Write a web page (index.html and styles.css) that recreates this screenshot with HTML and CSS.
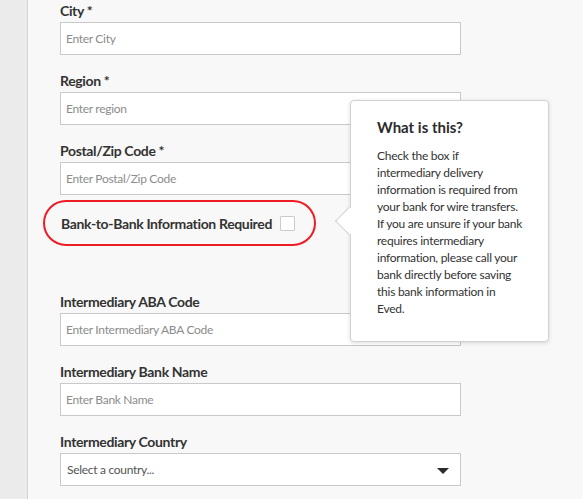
FILE: index.html
```html
<!DOCTYPE html>
<html lang="en">
<head>
<meta charset="utf-8">
<title>Bank information</title>
<link rel="stylesheet" href="styles.css">
</head>
<body>
<div class="page">
  <aside class="sidebar"></aside>
  <main class="main">
    <form class="form">
      <div class="field">
        <label class="label">City *</label>
        <input class="input" type="text" placeholder="Enter City">
      </div>
      <div class="field">
        <label class="label">Region *</label>
        <input class="input" type="text" placeholder="Enter region">
      </div>
      <div class="field field--tight">
        <label class="label">Postal/Zip Code *</label>
        <input class="input" type="text" placeholder="Enter Postal/Zip Code">
      </div>
      <div class="bank-row">
        <span class="label label--inline">Bank-to-Bank Information Required</span>
        <span class="checkbox"></span>
      </div>
      <div class="field">
        <label class="label">Intermediary ABA Code</label>
        <input class="input" type="text" placeholder="Enter Intermediary ABA Code">
      </div>
      <div class="field">
        <label class="label">Intermediary Bank Name</label>
        <input class="input" type="text" placeholder="Enter Bank Name">
      </div>
      <div class="field">
        <label class="label">Intermediary Country</label>
        <div class="select">
          <span class="select-text">Select a country...</span>
          <svg class="select-arrow" width="12" height="6" viewBox="0 0 12 6"><path d="M0 0 H12 L6 6 Z" fill="#2b2b2b"/></svg>
        </div>
      </div>
    </form>
    <div class="popover">
      <span class="popover-arrow"></span>
      <h3 class="popover-title">What is this?</h3>
      <p class="popover-text">Check the box if<br>intermediary delivery<br>information is required from<br>your bank for wire transfers.<br>If you are unsure if your bank<br>requires intermediary<br>information, please call your<br>bank directly before saving<br>this bank information in<br>Eved.</p>
    </div>
  </main>
</div>
</body>
</html>
```

FILE: styles.css
```css
* { box-sizing: border-box; }
html, body { margin: 0; padding: 0; }
body {
  font-family: Lato, "Open Sans", sans-serif;
  color: #333;
  background: #f8f8f8;
  width: 583px;
  height: 499px;
  overflow: hidden;
}
.page {
  display: flex;
  height: 499px;
}
.sidebar {
  width: 28px;
  flex: 0 0 28px;
  background: #ebebeb;
  border-right: 1px solid #d3d3d3;
}
.main {
  position: relative;
  flex: 1;
  padding: 2px 0 0 32px;
  background: #f8f8f8;
}
.form {
  width: 401px;
}
.field {
  display: flex;
  flex-direction: column;
  margin-bottom: 17px;
}
.field--tight { margin-bottom: 5px; }
.label {
  display: block;
  font-size: 14px;
  font-weight: 700;
  letter-spacing: -0.35px;
  line-height: 17px;
  height: 17px;
  margin-bottom: 3px;
  color: #333;
}
.label--inline {
  display: inline-block;
  margin: 0;
}
.input {
  display: block;
  width: 401px;
  height: 33px;
  border: 1px solid #c9c9c9;
  background: #fff;
  padding: 0 5px;
  font-family: inherit;
  font-size: 12px;
  letter-spacing: -0.3px;
  color: #333;
  outline: none;
  border-radius: 0;
  margin: 0;
}
.input::placeholder { color: #8c8c8c; }
.bank-row {
  display: inline-flex;
  align-items: center;
  gap: 8px;
  height: 46px;
  margin-left: -17px;
  padding: 0 19px 0 16px;
  border: 2px solid #ee1c24;
  border-radius: 23px;
  margin-bottom: 47px;
}
.checkbox {
  width: 15px;
  height: 15px;
  border: 1px solid #cbcbcb;
  background: #fff;
  border-radius: 1px;
}
.select {
  display: flex;
  align-items: center;
  justify-content: space-between;
  width: 401px;
  height: 33px;
  border: 1px solid #c9c9c9;
  background: #fff;
  padding: 0 11px 0 6px;
}
.select-text {
  font-size: 12px;
  letter-spacing: -0.3px;
  color: #555;
}
.select-arrow { display: block; margin-top: 2px; }
.popover {
  position: absolute;
  left: 322px;
  top: 100px;
  width: 199px;
  height: 242px;
  background: #fff;
  border: 1px solid #d2d2d2;
  border-radius: 4px;
  box-shadow: 0 1px 4px rgba(0,0,0,0.14);
  padding: 16px 8px 0 26px;
}
.popover-arrow {
  position: absolute;
  left: -12px;
  top: 110px;
  width: 20px;
  height: 20px;
  background: #fff;
  border-left: 1px solid #d2d2d2;
  border-bottom: 1px solid #d2d2d2;
  transform: rotate(45deg);
}
.popover-title {
  margin: 0 0 10px;
  font-size: 15px;
  line-height: 20px;
  font-weight: 700;
  color: #2b2b2b;
}
.popover-text {
  margin: 0;
  font-size: 12px;
  letter-spacing: -0.25px;
  line-height: 17px;
  white-space: nowrap;
  color: #333;
}
```
